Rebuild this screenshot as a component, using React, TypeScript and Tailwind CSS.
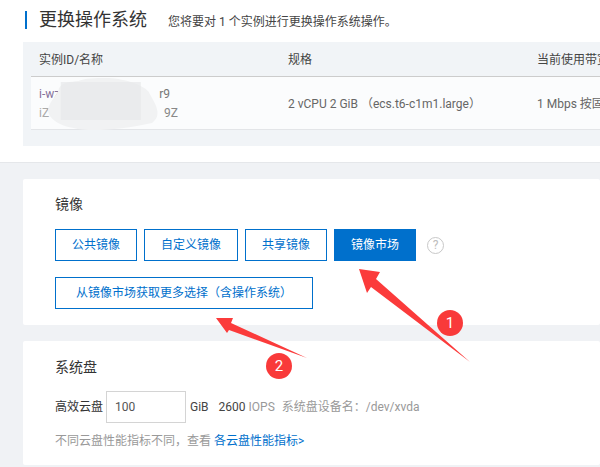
export default function App() {
  const font = { fontFamily: 'Roboto, "Noto Sans CJK SC", "Noto Sans", sans-serif' };
  const btn = "h-8 border-[1px] border-[#0070cc] flex items-center justify-center text-[12px] text-[#0070cc] bg-white";
  return (
    <div className="relative w-[600px] h-[467px] overflow-hidden bg-[#f0f2f5] text-[#333]" style={font}>
      <div className="h-[163px] bg-white border-b border-[#e5e7ea] pl-[23px]">
        <div className="h-[42px] flex items-center pl-[2px]">
          <div className="w-[2px] h-[18px] bg-[#0070cc] mt-[-2px]" />
          <div className="ml-[12px] text-[18px] leading-[24px] mt-[-2px] text-[#333]">更换操作系统</div>
          <div className="ml-[21px] text-[12px] leading-[18px] mt-[2px] text-[#444]">您将要对 1 个实例进行更换操作系统操作。</div>
        </div>
        <div className="h-[104px] w-[577px] bg-[#f1f4f7] pl-[8px] overflow-hidden">
          <div className="h-[35px] border-b border-[#ccc] flex items-center text-[12px] text-[#444] w-[700px] pt-[2px]">
            <div className="w-[249px] pl-[8px] whitespace-nowrap">实例ID/名称</div>
            <div className="w-[249px] pl-[8px] whitespace-nowrap">规格</div>
            <div className="w-[200px] pl-[8px] whitespace-nowrap">当前使用带宽</div>
          </div>
          <div className="relative h-[53px] border-b border-[#e3e5e8] bg-[#fbfcfd] flex items-center text-[12px] text-[#666] w-[700px] pt-[2px]">
            <div className="w-[249px] pl-[8px] leading-[19px] mt-[-1px]">
              <div className="flex justify-between w-[131px] text-[#85709a]"><span>i-wz</span><span className="text-[#777]">r9</span></div>
              <div className="flex justify-between w-[139px] text-[#aaa]"><span>iZ</span><span className="text-[#888]">9Z</span></div>
            </div>
            <div className="w-[249px] pl-[8px] whitespace-nowrap">2 vCPU 2 GiB （ecs.t6-c1m1.large）</div>
            <div className="w-[200px] pl-[8px] whitespace-nowrap">1 Mbps 按固定带宽</div>
            <svg className="absolute left-[17px] top-[-1px]" width="116" height="56" viewBox="0 0 145 56" preserveAspectRatio="none">
              <path d="M38 5 C48 2 58 2 72 2 C92 2 118 8 126 16 C132 26 145 38 130 47 C92 54 50 56 32 52 C14 50 0 42 0 34 C2 24 12 20 14 12 C18 6 28 6 38 5 Z" fill="#f1f2f3" />
              <rect x="16" y="6" width="100" height="38" fill="#e7e8e9" opacity="0.7" />
            </svg>
          </div>
        </div>
      </div>

      <div className="mt-[16px] ml-[23px] w-[577px] h-[146px] bg-white rounded-[2px] pl-[32px] pt-[15px]">
        <div className="text-[14px] leading-[20px] text-[#333]">镜像</div>
        <div className="mt-[15px] flex items-center gap-[7px]">
          <div className={`${btn} w-[82px]`}>公共镜像</div>
          <div className={`${btn} w-[94px]`}>自定义镜像</div>
          <div className={`${btn} w-[82px]`}>共享镜像</div>
          <div className="h-8 w-[82px] bg-[#0070cc] text-white text-[12px] flex items-center justify-center">镜像市场</div>
          <div className="ml-[4px] w-[17px] h-[17px] rounded-full border-[1.5px] border-[#c8c8c8] text-[#bdbdbd] text-[12px] leading-[14px] text-center">?</div>
        </div>
        <div className={`${btn} w-[258px] mt-[16px]`}>从镜像市场获取更多选择（含操作系统）</div>
      </div>

      <div className="mt-[16px] ml-[23px] w-[577px] h-[124px] bg-white rounded-[2px] pl-[32px] pt-[16px]">
        <div className="text-[14px] leading-[20px] text-[#333]">系统盘</div>
        <div className="mt-[14px] flex items-center text-[12px]">
          <span className="text-[#333] w-[51px] whitespace-nowrap">高效云盘</span>
          <div className="w-[80px] h-8 border border-[#d4d4d4] flex items-center pl-[8px] text-[#555]">100</div>
          <span className="ml-[4px] text-[#444]">GiB</span>
          <span className="ml-[10px] text-[#444]">2600</span>
          <span className="ml-[3px] text-[#999]">IOPS</span>
          <span className="ml-[7px] text-[#999]">系统盘设备名：/dev/xvda</span>
        </div>
        <div className="mt-[9px] text-[12px] leading-[18px] text-[#999]">
          不同云盘性能指标不同，查看 <span className="text-[#0070cc]">各云盘性能指标&gt;</span>
        </div>
      </div>

      <svg className="absolute left-0 top-0 pointer-events-none" width="600" height="467" viewBox="0 0 600 467">
        <path d="M359 269 L380 272 L376 279 L470 362 L371 287 L367 293 Z" fill="#fb3b3b" />
        <path d="M216 318 L233 318 L231 323 L307 358 L229 330 L227 333 Z" fill="#fb3b3b" />
      </svg>
      <div className="absolute left-[437px] top-[310px] w-[26px] h-[26px] rounded-full bg-[#f93a3a] text-white text-[15px] leading-[26px] text-center">1</div>
      <div className="absolute left-[266px] top-[353px] w-[26px] h-[26px] rounded-full bg-[#f93a3a] text-white text-[15px] leading-[26px] text-center">2</div>
    </div>
  );
}
